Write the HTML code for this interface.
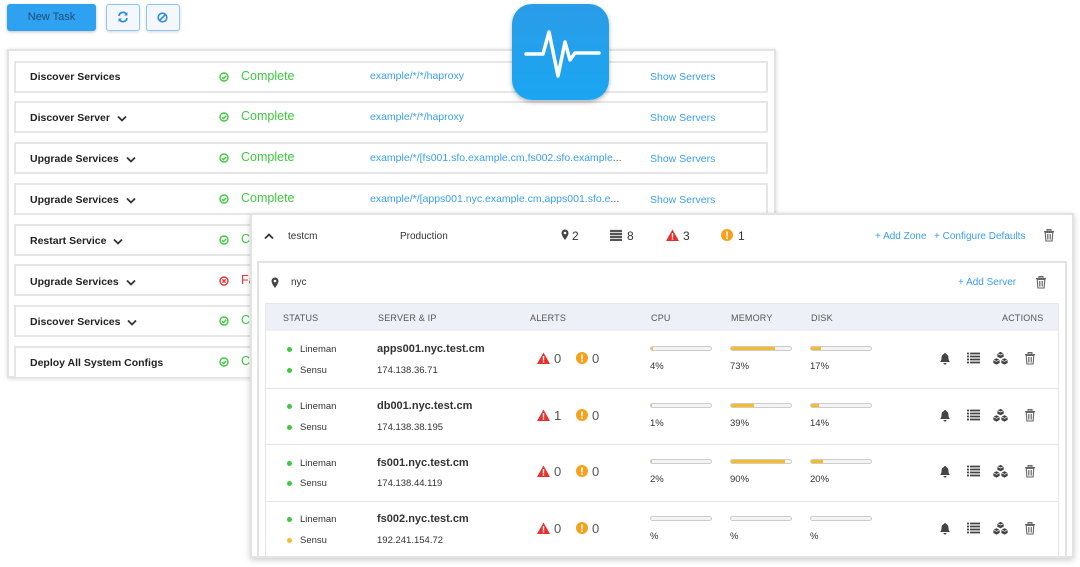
<!DOCTYPE html>
<html><head><meta charset="utf-8"><style>
*{box-sizing:border-box;margin:0;padding:0}
body{width:1080px;height:567px;background:#fff;position:relative;overflow:hidden;font-family:"Liberation Sans",sans-serif;color:#333}
.a{position:absolute;white-space:nowrap}
.btn{position:absolute;border-radius:3px}
.row{position:absolute;left:14px;width:754px;height:32px;border:2px solid #e6e6e6;background:#fff}
.t{font-weight:bold;font-size:10.5px;color:#222}
.t svg{margin-left:7px;vertical-align:middle}
.g{color:#3ec93e;font-size:12.5px}
.l{color:#3a9ff0;font-size:10.5px}
.hd{font-size:9px;color:#555;letter-spacing:.2px}
.bar{position:absolute;width:62px;height:5px;border:1px solid #ccc;border-radius:3px;background:#f4f4f4;overflow:hidden}
.bar i{display:block;height:100%;background:#f7bb2a}
.pct{font-size:9.5px;color:#333}
</style></head><body>
<svg width="0" height="0" style="position:absolute"><defs>
<g id="ok"><circle cx="5" cy="5" r="4" fill="none" stroke="#3ec93e" stroke-width="1.4"/><path d="M3 5.2l1.5 1.4L7.2 3.8" fill="none" stroke="#3ec93e" stroke-width="1.4"/></g>
<g id="bad"><circle cx="5" cy="5" r="4" fill="none" stroke="#e8363a" stroke-width="1.4"/><path d="M3.4 3.4l3.2 3.2M6.6 3.4L3.4 6.6" stroke="#e8363a" stroke-width="1.4"/></g>
<g id="warn"><path d="M6.5 0.5L13 12H0z" fill="#e8302c"/><rect x="5.8" y="4" width="1.4" height="4.5" fill="#fff"/><rect x="5.8" y="9.3" width="1.4" height="1.4" fill="#fff"/></g>
<g id="ex"><circle cx="6" cy="6" r="6" fill="#f5a11c"/><rect x="5.2" y="2.5" width="1.6" height="4.8" fill="#fff"/><rect x="5.2" y="8.3" width="1.6" height="1.6" fill="#fff"/></g>
<g id="trash"><rect x="1" y="2" width="10" height="1.2" fill="#666"/><rect x="4" y="0.5" width="4" height="1.5" fill="none" stroke="#666"/><path d="M2.2 3.5h7.6l-.7 8.5H2.9z" fill="none" stroke="#666" stroke-width="1.1"/><path d="M4.5 5v5.5M6 5v5.5M7.5 5v5.5" stroke="#666" stroke-width=".8"/></g>
<g id="pin"><path d="M4 0.5a3.5 3.5 0 0 1 3.5 3.5c0 2.5-3.5 7-3.5 7S0.5 6.5 0.5 4A3.5 3.5 0 0 1 4 0.5z" fill="#444"/><circle cx="4" cy="4" r="1.3" fill="#fff"/></g>
<g id="bell"><path d="M6 1a1 1 0 0 1 1 1c2 .5 2.5 2.3 2.5 4.5 0 2 1 3 1.5 3.5H1c.5-.5 1.5-1.5 1.5-3.5C2.5 4.3 3 2.5 5 2a1 1 0 0 1 1-1z" fill="#444"/><path d="M4.5 11a1.5 1.5 0 0 0 3 0z" fill="#444"/></g>
<g id="list"><path d="M0 1.5h2M3 1.5h10M0 4.5h2M3 4.5h10M0 7.5h2M3 7.5h10M0 10.5h2M3 10.5h10" stroke="#444" stroke-width="1.8"/></g>
<g id="cubes"><path d="M8.5 0.5l3.5 1.8v3.6l-3.5 1.8L5 5.9V2.3z M4.5 6.8l3.5 1.8v3.6L4.5 14 1 12.2V8.6z M12.5 6.8l3.5 1.8v3.6L12.5 14 9 12.2V8.6z" fill="#444" stroke="#fff" stroke-width=".7"/><path d="M5 2.3l3.5 1.8 3.5-1.8M1 8.6l3.5 1.8 3.5-1.8M9 8.6l3.5 1.8 3.5-1.8" fill="none" stroke="#fff" stroke-width=".7"/></g>
<g id="chev"><path d="M1 1.5l4 4 4-4" fill="none" stroke="#333" stroke-width="1.8"/></g>
</defs></svg>

<div class="btn" style="left:7px;top:4px;width:89px;height:27px;background:#2ea2f0;box-shadow:0 1px 3px rgba(0,0,0,.25)"></div>
<div class="a" style="left:7px;top:11px;width:89px;text-align:center;font-size:11px;color:#1d4d78">New Task</div>
<div class="btn" style="left:106px;top:4px;width:34px;height:27px;border:1px solid #8cc8f5;background:#f4f8fc;box-shadow:0 1px 3px rgba(0,0,0,.15)"></div>
<svg class="a" style="left:117px;top:11px" width="12" height="12" viewBox="0 0 12 12"><path d="M2 5A4 4 0 0 1 9.5 3.5M10 7A4 4 0 0 1 2.5 8.5" fill="none" stroke="#2e8fe0" stroke-width="1.8"/><path d="M10.5 1v3.5H7zM1.5 11V7.5H5z" fill="#2e8fe0"/></svg>
<div class="btn" style="left:146px;top:4px;width:34px;height:27px;border:1px solid #8cc8f5;background:#f4f8fc;box-shadow:0 1px 3px rgba(0,0,0,.15)"></div>
<svg class="a" style="left:157px;top:12px" width="11" height="11" viewBox="0 0 11 11"><circle cx="5.5" cy="5.5" r="4.3" fill="none" stroke="#2e8fe0" stroke-width="1.6"/><path d="M2.5 8.5l6-6" stroke="#2e8fe0" stroke-width="1.6"/></svg>

<div class="a" style="left:7px;top:49px;width:769px;height:329px;border:2px solid #e3e3e3;background:#fff;box-shadow:0 1px 4px rgba(0,0,0,.15)"></div>

<div class="row" style="top:61px"></div><div class="row" style="top:101px"></div><div class="row" style="top:142px"></div><div class="row" style="top:183px"></div><div class="row" style="top:224px"></div><div class="row" style="top:264px"></div><div class="row" style="top:305px"></div><div class="row" style="top:346px;height:31px;border-bottom:none"></div>

<div class="a t" style="left:30px;top:71px">Discover Services</div>
<div class="a t" style="left:30px;top:112px">Discover Server<svg width="10" height="7"><use href="#chev"/></svg></div>
<div class="a t" style="left:30px;top:153px">Upgrade Services<svg width="10" height="7"><use href="#chev"/></svg></div>
<div class="a t" style="left:30px;top:194px">Upgrade Services<svg width="10" height="7"><use href="#chev"/></svg></div>
<div class="a t" style="left:30px;top:235px">Restart Service<svg width="10" height="7"><use href="#chev"/></svg></div>
<div class="a t" style="left:30px;top:276px">Upgrade Services<svg width="10" height="7"><use href="#chev"/></svg></div>
<div class="a t" style="left:30px;top:316px">Discover Services<svg width="10" height="7"><use href="#chev"/></svg></div>
<div class="a t" style="left:30px;top:357px">Deploy All System Configs</div>

<svg class="a" style="left:219px;top:72px" width="10" height="10"><use href="#ok"/></svg><div class="a g" style="left:241px;top:69px">Complete</div>
<svg class="a" style="left:219px;top:112px" width="10" height="10"><use href="#ok"/></svg><div class="a g" style="left:241px;top:109px">Complete</div>
<svg class="a" style="left:219px;top:153px" width="10" height="10"><use href="#ok"/></svg><div class="a g" style="left:241px;top:150px">Complete</div>
<svg class="a" style="left:219px;top:194px" width="10" height="10"><use href="#ok"/></svg><div class="a g" style="left:241px;top:191px">Complete</div>
<svg class="a" style="left:219px;top:235px" width="10" height="10"><use href="#ok"/></svg><div class="a g" style="left:241px;top:232px">Co</div>
<svg class="a" style="left:219px;top:276px" width="10" height="10"><use href="#bad"/></svg><div class="a" style="left:241px;top:273px;color:#e8363a;font-size:12.5px">Fa</div>
<svg class="a" style="left:219px;top:316px" width="10" height="10"><use href="#ok"/></svg><div class="a g" style="left:241px;top:313px">Co</div>
<svg class="a" style="left:219px;top:357px" width="10" height="10"><use href="#ok"/></svg><div class="a g" style="left:241px;top:354px">Co</div>

<div class="a l" style="left:370px;top:70px">example/*/*/haproxy</div>
<div class="a l" style="left:370px;top:111px">example/*/*/haproxy</div>
<div class="a l" style="left:370px;top:152px">example/*/[fs001.sfo.example.cm,fs002.sfo.example<span style="color:#555">...</span></div>
<div class="a l" style="left:370px;top:193px">example/*/[apps001.nyc.example.cm,apps001.sfo.e<span style="color:#555">...</span></div>
<div class="a l" style="left:650px;top:71px">Show Servers</div>
<div class="a l" style="left:650px;top:112px">Show Servers</div>
<div class="a l" style="left:650px;top:153px">Show Servers</div>
<div class="a l" style="left:650px;top:194px">Show Servers</div>

<div class="a" style="left:512px;top:4px;width:97px;height:96px;border-radius:20px;background:linear-gradient(#2a9ce8,#1aa6f2);box-shadow:0 2px 5px rgba(0,0,0,.3)"></div>
<svg class="a" style="left:512px;top:4px" width="97" height="96" viewBox="0 0 97 96"><path d="M14 50h17l6-22 9 44 7-34 5 18 5-7h24" fill="none" stroke="#fff" stroke-width="3.5" stroke-linejoin="round" stroke-linecap="round"/></svg>

<div class="a" style="left:250px;top:213px;width:824px;height:345px;border:2px solid #e3e3e3;background:#fff;box-shadow:0 2px 6px rgba(0,0,0,.2)"></div>
<svg class="a" style="left:264px;top:233px" width="10" height="7"><g transform="rotate(180 5 3.5)"><use href="#chev"/></g></svg>
<div class="a" style="left:288px;top:231px;font-size:10px">testcm</div>
<div class="a" style="left:400px;top:231px;font-size:10px">Production</div>
<svg class="a" style="left:561px;top:229px" width="8" height="12"><use href="#pin"/></svg><div class="a" style="left:572px;top:229px;font-size:12px">2</div>
<svg class="a" style="left:610px;top:229px" width="12" height="12" viewBox="0 0 12 12"><path d="M0 2h12M0 5h12M0 8h12M0 11h12" stroke="#555" stroke-width="2.2"/></svg><div class="a" style="left:627px;top:229px;font-size:12px">8</div>
<svg class="a" style="left:666px;top:229px" width="13" height="12"><use href="#warn"/></svg><div class="a" style="left:683px;top:229px;font-size:12px">3</div>
<svg class="a" style="left:721px;top:229px" width="12" height="12"><use href="#ex"/></svg><div class="a" style="left:738px;top:229px;font-size:12px">1</div>
<div class="a l" style="left:875px;top:231px;font-size:10px">+ Add Zone</div>
<div class="a l" style="left:934px;top:231px;font-size:10px">+ Configure Defaults</div>
<svg class="a" style="left:1043px;top:229px" width="12" height="13"><use href="#trash"/></svg>

<div class="a" style="left:257px;top:261px;width:810px;height:297px;border:2px solid #e3e3e3;border-bottom:none"></div>
<svg class="a" style="left:271px;top:277px" width="8" height="12"><use href="#pin"/></svg>
<div class="a" style="left:291px;top:277px;font-size:10px">nyc</div>
<div class="a l" style="left:958px;top:277px;font-size:10px">+ Add Server</div>
<svg class="a" style="left:1035px;top:276px" width="12" height="13"><use href="#trash"/></svg>

<div class="a" style="left:265px;top:303px;width:794px;height:255px;border:1px solid #e4e6ee;border-bottom:none"></div>
<div class="a" style="left:266px;top:304px;width:792px;height:27px;background:#eef0f8"></div>
<div class="a hd" style="left:283px;top:313px">STATUS</div>
<div class="a hd" style="left:378px;top:313px">SERVER &amp; IP</div>
<div class="a hd" style="left:530px;top:313px">ALERTS</div>
<div class="a hd" style="left:651px;top:313px">CPU</div>
<div class="a hd" style="left:731px;top:313px">MEMORY</div>
<div class="a hd" style="left:811px;top:313px">DISK</div>
<div class="a hd" style="left:1002px;top:313px">ACTIONS</div>

<div class="a" style="left:266px;top:388px;width:792px;height:1px;background:#e4e6ee"></div>
<div class="a" style="left:266px;top:444px;width:792px;height:1px;background:#e4e6ee"></div>
<div class="a" style="left:266px;top:501px;width:792px;height:1px;background:#e4e6ee"></div>

<div class="a" style="left:287px;top:347px;width:5px;height:5px;border-radius:50%;background:#3ec93e"></div><div class="a" style="left:300px;top:344px;font-size:9.5px">Lineman</div>
<div class="a" style="left:287px;top:368px;width:5px;height:5px;border-radius:50%;background:#3ec93e"></div><div class="a" style="left:300px;top:365px;font-size:9.5px">Sensu</div>
<div class="a" style="left:377px;top:343px;font-size:11px;font-weight:bold">apps001.nyc.test.cm</div>
<div class="a" style="left:377px;top:365px;font-size:9.5px">174.138.36.71</div>
<svg class="a" style="left:537px;top:352px" width="13" height="12"><use href="#warn"/></svg><div class="a" style="left:554px;top:351px;font-size:13px;color:#555">0</div>
<svg class="a" style="left:576px;top:352px" width="12" height="12"><use href="#ex"/></svg><div class="a" style="left:592px;top:351px;font-size:13px;color:#555">0</div>
<div class="bar" style="left:650px;top:346px"><i style="width:4%"></i></div><div class="a pct" style="left:650px;top:361px">4%</div>
<div class="bar" style="left:730px;top:346px"><i style="width:73%"></i></div><div class="a pct" style="left:730px;top:361px">73%</div>
<div class="bar" style="left:810px;top:346px"><i style="width:17%"></i></div><div class="a pct" style="left:810px;top:361px">17%</div>
<svg class="a" style="left:939px;top:352px" width="12" height="13"><use href="#bell"/></svg>
<svg class="a" style="left:967px;top:352px" width="13" height="12"><use href="#list"/></svg>
<svg class="a" style="left:992px;top:351px" width="17" height="15"><use href="#cubes"/></svg>
<svg class="a" style="left:1024px;top:352px" width="12" height="13"><use href="#trash"/></svg>

<div class="a" style="left:287px;top:404px;width:5px;height:5px;border-radius:50%;background:#3ec93e"></div><div class="a" style="left:300px;top:401px;font-size:9.5px">Lineman</div>
<div class="a" style="left:287px;top:425px;width:5px;height:5px;border-radius:50%;background:#3ec93e"></div><div class="a" style="left:300px;top:422px;font-size:9.5px">Sensu</div>
<div class="a" style="left:377px;top:400px;font-size:11px;font-weight:bold">db001.nyc.test.cm</div>
<div class="a" style="left:377px;top:422px;font-size:9.5px">174.138.38.195</div>
<svg class="a" style="left:537px;top:409px" width="13" height="12"><use href="#warn"/></svg><div class="a" style="left:554px;top:408px;font-size:13px;color:#555">1</div>
<svg class="a" style="left:576px;top:409px" width="12" height="12"><use href="#ex"/></svg><div class="a" style="left:592px;top:408px;font-size:13px;color:#555">0</div>
<div class="bar" style="left:650px;top:403px"><i style="width:1%"></i></div><div class="a pct" style="left:650px;top:418px">1%</div>
<div class="bar" style="left:730px;top:403px"><i style="width:39%"></i></div><div class="a pct" style="left:730px;top:418px">39%</div>
<div class="bar" style="left:810px;top:403px"><i style="width:14%"></i></div><div class="a pct" style="left:810px;top:418px">14%</div>
<svg class="a" style="left:939px;top:409px" width="12" height="13"><use href="#bell"/></svg>
<svg class="a" style="left:967px;top:409px" width="13" height="12"><use href="#list"/></svg>
<svg class="a" style="left:992px;top:408px" width="17" height="15"><use href="#cubes"/></svg>
<svg class="a" style="left:1024px;top:409px" width="12" height="13"><use href="#trash"/></svg>

<div class="a" style="left:287px;top:461px;width:5px;height:5px;border-radius:50%;background:#3ec93e"></div><div class="a" style="left:300px;top:458px;font-size:9.5px">Lineman</div>
<div class="a" style="left:287px;top:481px;width:5px;height:5px;border-radius:50%;background:#3ec93e"></div><div class="a" style="left:300px;top:478px;font-size:9.5px">Sensu</div>
<div class="a" style="left:377px;top:457px;font-size:11px;font-weight:bold">fs001.nyc.test.cm</div>
<div class="a" style="left:377px;top:478px;font-size:9.5px">174.138.44.119</div>
<svg class="a" style="left:537px;top:465px" width="13" height="12"><use href="#warn"/></svg><div class="a" style="left:554px;top:464px;font-size:13px;color:#555">0</div>
<svg class="a" style="left:576px;top:465px" width="12" height="12"><use href="#ex"/></svg><div class="a" style="left:592px;top:464px;font-size:13px;color:#555">0</div>
<div class="bar" style="left:650px;top:459px"><i style="width:2%"></i></div><div class="a pct" style="left:650px;top:474px">2%</div>
<div class="bar" style="left:730px;top:459px"><i style="width:90%"></i></div><div class="a pct" style="left:730px;top:474px">90%</div>
<div class="bar" style="left:810px;top:459px"><i style="width:20%"></i></div><div class="a pct" style="left:810px;top:474px">20%</div>
<svg class="a" style="left:939px;top:465px" width="12" height="13"><use href="#bell"/></svg>
<svg class="a" style="left:967px;top:465px" width="13" height="12"><use href="#list"/></svg>
<svg class="a" style="left:992px;top:464px" width="17" height="15"><use href="#cubes"/></svg>
<svg class="a" style="left:1024px;top:465px" width="12" height="13"><use href="#trash"/></svg>

<div class="a" style="left:287px;top:517px;width:5px;height:5px;border-radius:50%;background:#3ec93e"></div><div class="a" style="left:300px;top:514px;font-size:9.5px">Lineman</div>
<div class="a" style="left:287px;top:538px;width:5px;height:5px;border-radius:50%;background:#f7bb2a"></div><div class="a" style="left:300px;top:535px;font-size:9.5px">Sensu</div>
<div class="a" style="left:377px;top:513px;font-size:11px;font-weight:bold">fs002.nyc.test.cm</div>
<div class="a" style="left:377px;top:535px;font-size:9.5px">192.241.154.72</div>
<svg class="a" style="left:537px;top:522px" width="13" height="12"><use href="#warn"/></svg><div class="a" style="left:554px;top:521px;font-size:13px;color:#555">0</div>
<svg class="a" style="left:576px;top:522px" width="12" height="12"><use href="#ex"/></svg><div class="a" style="left:592px;top:521px;font-size:13px;color:#555">0</div>
<div class="bar" style="left:650px;top:516px"></div><div class="a pct" style="left:650px;top:531px">%</div>
<div class="bar" style="left:730px;top:516px"></div><div class="a pct" style="left:730px;top:531px">%</div>
<div class="bar" style="left:810px;top:516px"></div><div class="a pct" style="left:810px;top:531px">%</div>
<svg class="a" style="left:939px;top:522px" width="12" height="13"><use href="#bell"/></svg>
<svg class="a" style="left:967px;top:522px" width="13" height="12"><use href="#list"/></svg>
<svg class="a" style="left:992px;top:521px" width="17" height="15"><use href="#cubes"/></svg>
<svg class="a" style="left:1024px;top:522px" width="12" height="13"><use href="#trash"/></svg>
</body></html>
